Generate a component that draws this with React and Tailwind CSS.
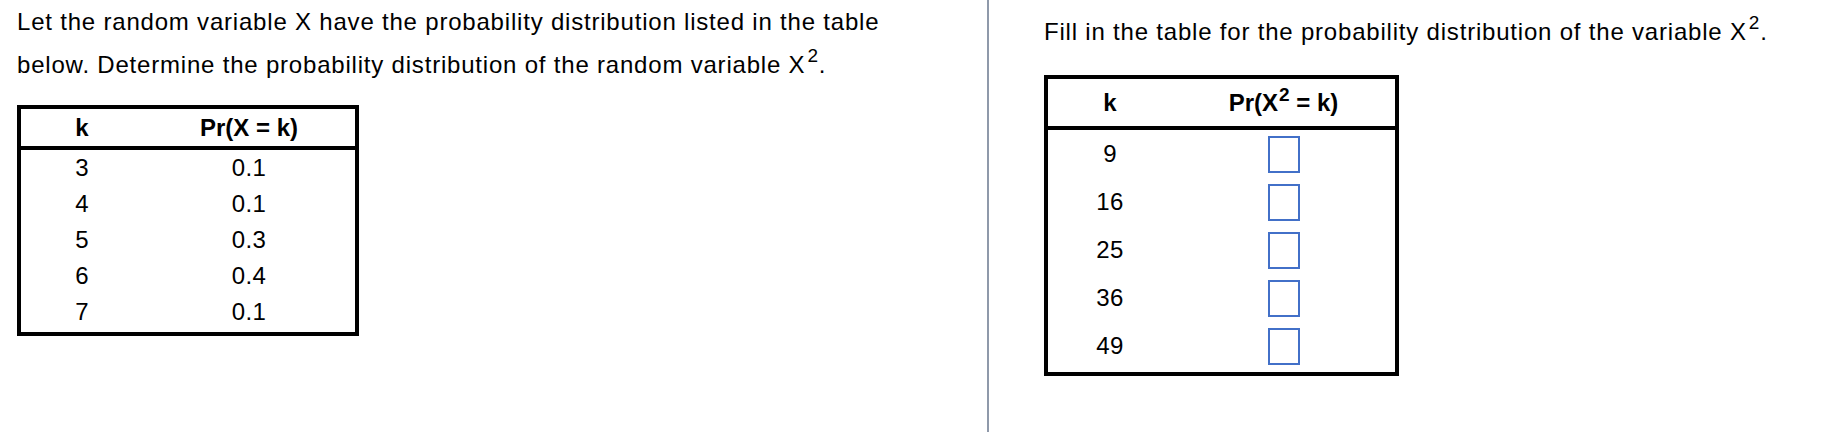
import React from "react";

const leftRows = [
    { k: "3", p: "0.1" },
    { k: "4", p: "0.1" },
    { k: "5", p: "0.3" },
    { k: "6", p: "0.4" },
    { k: "7", p: "0.1" },
];

const rightRows = ["9", "16", "25", "36", "49"];

function Sq() {
    return <sup className="relative -top-[11px] ml-[2px] align-baseline text-[19px] leading-none">2</sup>;
}

export default function App() {
    return (
        <div className="flex h-[432px] w-[1848px] overflow-hidden bg-white text-black font-['Liberation_Sans',Arial,sans-serif]">
            {/* left: the given distribution */}
            <div className="w-[987px] shrink-0 pl-[17px]">
                <p className="text-[24px] leading-[43px] tracking-[0.8px]">
                    Let the random variable X have the probability distribution listed in the table
                    <br />
                    below. Determine the probability distribution of the random variable X<Sq />.
                </p>

                <div className="mt-[19px] w-[342px] border-4 border-black">
                    <div className="grid h-[41px] grid-cols-[122px_1fr] items-center border-b-4 border-black text-[24px] font-bold">
                        <div className="text-center">k</div>
                        <div className="text-center">Pr(X = k)</div>
                    </div>
                    <div className="pb-[2px]">
                        {leftRows.map((row) => (
                            <div key={row.k} className="grid h-[36px] grid-cols-[122px_1fr] items-center text-[24px] tracking-[0.3px]">
                                <div className="text-center">{row.k}</div>
                                <div className="text-center">{row.p}</div>
                            </div>
                        ))}
                    </div>
                </div>
            </div>

            <div className="w-[2px] shrink-0 bg-[#8f99aa]" />

            {/* right: the table to fill in */}
            <div className="flex-1 pl-[55px] pt-[10px]">
                <p className="text-[24px] leading-[44px] tracking-[0.8px]">
                    Fill in the table for the probability distribution of the variable X<Sq />.
                </p>

                <div className="mt-[21px] w-[355px] border-4 border-black">
                    <div className="grid h-[51px] grid-cols-[124px_1fr] items-center border-b-4 border-black text-[24px] font-bold">
                        <div className="text-center">k</div>
                        <div className="text-center">
                            Pr(X<sup className="relative -top-[10px] ml-[1px] align-baseline text-[19px] leading-none">2</sup> = k)
                        </div>
                    </div>
                    <div className="pb-[2px]">
                        {rightRows.map((k) => (
                            <div key={k} className="grid h-[48px] grid-cols-[124px_1fr] items-center text-[24px] tracking-[0.3px]">
                                <div className="text-center">{k}</div>
                                <div className="flex justify-center">
                                    <input
                                        type="text"
                                        aria-label={`Pr(X^2 = ${k})`}
                                        className="h-[37px] w-[32px] border-2 border-[#4270c8] bg-white outline-none"
                                    />
                                </div>
                            </div>
                        ))}
                    </div>
                </div>
            </div>
        </div>
    );
}
